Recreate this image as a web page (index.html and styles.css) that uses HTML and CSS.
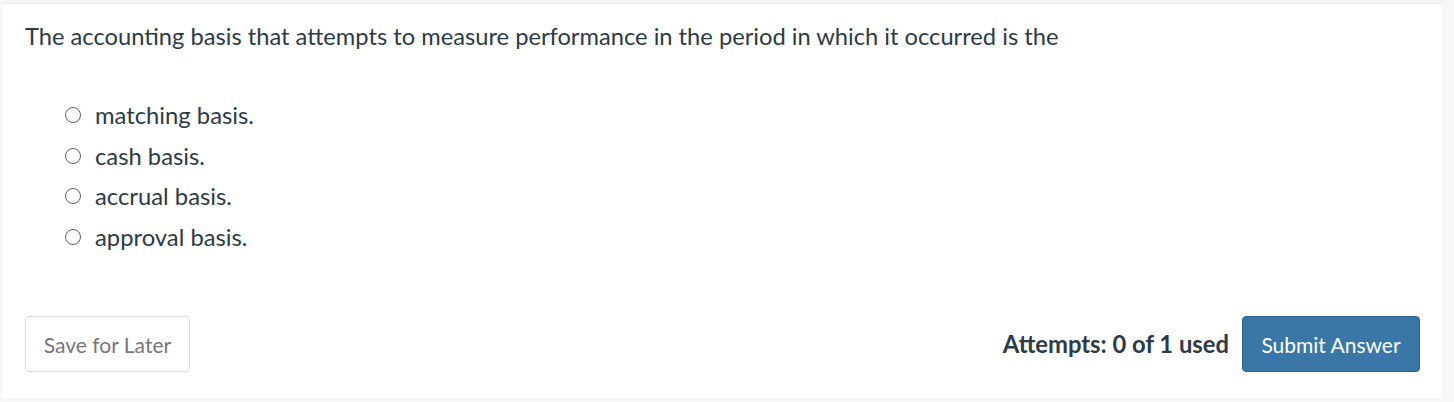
FILE: index.html
```html
<!DOCTYPE html>
<html lang="en">
<head>
    <meta charset="UTF-8">
    <title>Question</title>
    <link rel="stylesheet" href="styles.css">
</head>
<body>
    <div class="card">
        <p class="question">The accounting basis that attempts to measure performance in the period in which it occurred is the</p>
        <ul class="answers">
            <li><label><input type="radio" name="ans"><span>matching basis.</span></label></li>
            <li><label><input type="radio" name="ans"><span>cash basis.</span></label></li>
            <li><label><input type="radio" name="ans"><span>accrual basis.</span></label></li>
            <li><label><input type="radio" name="ans"><span>approval basis.</span></label></li>
        </ul>
        <div class="footer">
            <button class="btn btn-save">Save for Later</button>
            <div class="right">
                <span class="attempts">Attempts: 0 of 1 used</span>
                <button class="btn btn-submit">Submit Answer</button>
            </div>
        </div>
    </div>
</body>
</html>
```

FILE: styles.css
```css
html,
body {
    margin: 0;
    padding: 0;
    background-color: #f7f7f7;
}

body {
    font-family: Lato, "Open Sans", sans-serif;
    color: #2d3b45;
    padding: 3px 12px 4px 2px;
}

.card {
    background-color: #fff;
    border-top: 1px solid #e6e6e6;
    padding: 17px 22px 26px 23px;
    height: 395px;
    box-sizing: border-box;
    display: flex;
    flex-direction: column;
}

.question {
    margin: 0;
    font-size: 23.7px;
    line-height: 30px;
}

.answers {
    list-style: none;
    margin: 49px 0 0 0;
    padding: 0 0 0 39px;
}

.answers li {
    height: 40.7px;
}

.answers label {
    display: flex;
    align-items: center;
    font-size: 23.8px;
    line-height: 30px;
}

.answers input {
    width: 16px;
    height: 16px;
    margin: 0 14px 0 1px;
    appearance: none;
    border: 1.3px solid #5e5e5e;
    border-radius: 50%;
    background: #fff;
}

.footer {
    margin-top: auto;
    display: flex;
    justify-content: space-between;
    align-items: center;
}

.right {
    display: flex;
    align-items: center;
    gap: 13px;
}

.attempts {
    font-size: 23.8px;
    font-weight: bold;
}

.btn {
    font-family: Lato, "Open Sans", sans-serif;
    font-size: 21px;
    height: 56px;
    border-radius: 4px;
    white-space: nowrap;
    padding: 0;
    cursor: pointer;
}

.btn-save {
    background-color: #fff;
    color: #777;
    border: 1px solid #dcdcdc;
    width: 165px;
}

.btn-submit {
    background-color: #3a77a8;
    color: #fff;
    border: 1px solid #2f6691;
    width: 178px;
}
```
